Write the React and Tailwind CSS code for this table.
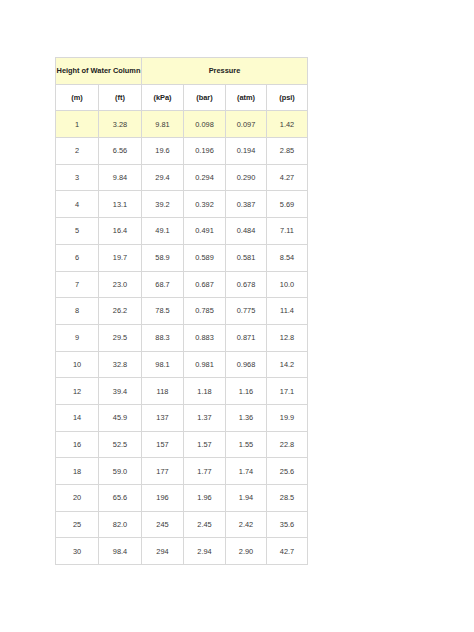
const rows = [
  ['1', '3.28', '9.81', '0.098', '0.097', '1.42'],
  ['2', '6.56', '19.6', '0.196', '0.194', '2.85'],
  ['3', '9.84', '29.4', '0.294', '0.290', '4.27'],
  ['4', '13.1', '39.2', '0.392', '0.387', '5.69'],
  ['5', '16.4', '49.1', '0.491', '0.484', '7.11'],
  ['6', '19.7', '58.9', '0.589', '0.581', '8.54'],
  ['7', '23.0', '68.7', '0.687', '0.678', '10.0'],
  ['8', '26.2', '78.5', '0.785', '0.775', '11.4'],
  ['9', '29.5', '88.3', '0.883', '0.871', '12.8'],
  ['10', '32.8', '98.1', '0.981', '0.968', '14.2'],
  ['12', '39.4', '118', '1.18', '1.16', '17.1'],
  ['14', '45.9', '137', '1.37', '1.36', '19.9'],
  ['16', '52.5', '157', '1.57', '1.55', '22.8'],
  ['18', '59.0', '177', '1.77', '1.74', '25.6'],
  ['20', '65.6', '196', '1.96', '1.94', '28.5'],
  ['25', '82.0', '245', '2.45', '2.42', '35.6'],
  ['30', '98.4', '294', '2.94', '2.90', '42.7'],
]

const units = ['(m)', '(ft)', '(kPa)', '(bar)', '(atm)', '(psi)']

export default function App() {
  return (
    <div className="min-h-[632px] w-[474px] bg-white pl-[55px] pt-[57px] font-['Liberation_Sans',Arial,sans-serif]">
      <table className="w-[252px] table-fixed border-collapse text-center text-[7.4px]">
        <colgroup>
          <col className="w-[43px]" />
          <col className="w-[43px]" />
          <col className="w-[42px]" />
          <col className="w-[42px]" />
          <col className="w-[41px]" />
          <col className="w-[41px]" />
        </colgroup>
        <thead>
          <tr className="h-[26.7px] bg-[#fdfccf] font-bold text-[#222]">
            <th colSpan={2} className="whitespace-nowrap border border-[#d8d8d8] p-0">
              Height of Water Column
            </th>
            <th colSpan={4} className="border border-[#d8d8d8] p-0">
              Pressure
            </th>
          </tr>
          <tr className="h-[26.7px] font-bold text-[#222]">
            {units.map((u) => (
              <th key={u} className="border border-[#d8d8d8] p-0">
                {u}
              </th>
            ))}
          </tr>
        </thead>
        <tbody className="text-[#3a3a3a]">
          {rows.map((row, i) => (
            <tr key={row[0]} className={i === 0 ? 'h-[26.7px] bg-[#fdfccf]' : 'h-[26.7px]'}>
              {row.map((cell, j) => (
                <td key={j} className="border border-[#d8d8d8] p-0">
                  {cell}
                </td>
              ))}
            </tr>
          ))}
        </tbody>
      </table>
    </div>
  )
}
